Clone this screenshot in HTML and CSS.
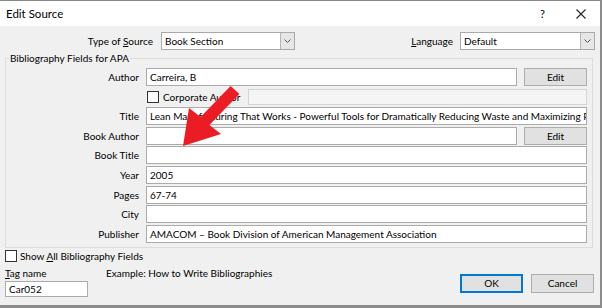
FILE: index.html
```html
<!DOCTYPE html>
<html lang="en">
<head>
    <meta charset="UTF-8">
    <title>Edit Source</title>
    <link rel="stylesheet" href="styles.css">
</head>
<body>
    <div class="window">
        <!-- title bar -->
        <div class="titlebar">
            <span class="title">Edit Source</span>
            <span class="help">?</span>
            <span class="close">
                <svg width="10" height="10" viewBox="0 0 10 10"><path d="M0.5 0.5 L9.5 9.5 M9.5 0.5 L0.5 9.5" stroke="#222" stroke-width="1.1" fill="none"/></svg>
            </span>
        </div>

        <div class="content">
            <div class="source-row">
                <label class="src-lbl">Type of <u>S</u>ource</label>
                <div class="select src-select">
                    <span class="value">Book Section</span>
                    <span class="drop"><svg width="7" height="4" viewBox="0 0 7 4"><path d="M0.5 0.5 L3.5 3.5 L6.5 0.5" stroke="#555" fill="none"/></svg></span>
                </div>
                <label class="lang-lbl"><u>L</u>anguage</label>
                <div class="select lang-select">
                    <span class="value">Default</span>
                    <span class="drop"><svg width="7" height="4" viewBox="0 0 7 4"><path d="M0.5 0.5 L3.5 3.5 L6.5 0.5" stroke="#555" fill="none"/></svg></span>
                </div>
            </div>

            <fieldset class="group">
                <legend>Bibliography Fields for APA</legend>
                <div class="fields">
                    <label>Author</label>
                    <div class="field">
                        <div class="input grow">Carreira, B</div>
                        <div class="button edit">Edit</div>
                    </div>

                    <span></span>
                    <div class="field corp">
                        <span class="check"></span>
                        <span class="corp-text">Corporate Author</span>
                        <div class="input disabled grow"></div>
                    </div>

                    <label>Title</label>
                    <div class="input">Lean Manufacturing That Works - Powerful Tools for Dramatically Reducing Waste and Maximizing Profits</div>

                    <label>Book Author</label>
                    <div class="field">
                        <div class="input grow"></div>
                        <div class="button edit">Edit</div>
                    </div>

                    <label>Book Title</label>
                    <div class="input"></div>

                    <label>Year</label>
                    <div class="input">2005</div>

                    <label>Pages</label>
                    <div class="input">67-74</div>

                    <label>City</label>
                    <div class="input"></div>

                    <label>Publisher</label>
                    <div class="input">AMACOM – Book Division of American Management Association</div>
                </div>
            </fieldset>

            <div class="footer">
                <div class="footer-left">
                    <div class="show-all">
                        <span class="check"></span>
                        <span>Show <u>A</u>ll Bibliography Fields</span>
                    </div>
                    <div class="tag-row">
                        <span class="tag-lbl"><u>T</u>ag name</span>
                        <span class="example">Example: How to Write Bibliographies</span>
                    </div>
                    <div class="input tag-input">Car052</div>
                </div>
                <div class="actions">
                    <div class="button ok">OK</div>
                    <div class="button">Cancel</div>
                </div>
            </div>
        </div>

        <!-- red annotation arrow -->
        <svg class="arrow" width="80" height="70" viewBox="0 0 80 70">
            <polygon points="69.4,13.1 60.6,4.9 30.6,35.9 19,27 13,65 51,53 39.4,44.1" fill="#ec1c24"/>
        </svg>
    </div>
</body>
</html>
```

FILE: styles.css
```css
* {
    box-sizing: border-box;
}

body {
    margin: 0;
    font-family: 'Lato', 'Noto Sans', sans-serif;
    font-size: 10px;
    color: #000;
    background-color: #fff;
}

.window {
    position: relative;
    width: 602px;
    height: 308px;
    background-color: #f0f0f0;
    border-top: 1px solid #8a8a8a;
    border-right: 2px solid #8c8c8c;
    border-bottom: 3px solid #8c8c8c;
    overflow: hidden;
}

.titlebar {
    height: 25px;
    background-color: #fff;
    display: flex;
    align-items: center;
    padding-left: 6px;
}

.title {
    font-size: 11.5px;
}

.help {
    margin-left: auto;
    font-size: 11px;
    width: 10px;
}

.close {
    display: flex;
    margin-left: 26px;
    margin-right: 14px;
}

.content {
    display: flex;
    flex-direction: column;
}

/* type of source / language */
.source-row {
    display: flex;
    align-items: center;
    margin-top: 6px;
    height: 18px;
}

.src-lbl {
    width: 153px;
    text-align: right;
    margin-right: 8px;
}

.lang-lbl {
    width: 158px;
    text-align: right;
    margin-right: 7px;
}

.select {
    display: flex;
    height: 18px;
    background-color: #fff;
    border: 1px solid #a9a9a9;
}

.src-select {
    width: 134px;
}

.lang-select {
    width: 135px;
}

.select .value {
    flex: 1;
    padding-left: 3px;
    line-height: 16px;
}

.select .drop {
    width: 14px;
    background-color: #e6e6e6;
    border-left: 1px solid #b4b4b4;
    display: flex;
    align-items: center;
    justify-content: center;
}

/* group box */
.group {
    margin: 2px 0 0 5px;
    width: 588px;
    border: 1px solid #dcdcdc;
    padding: 4px 5px 4px 0;
}

.group legend {
    padding: 0 1px;
    margin-left: 3px;
    line-height: 12px;
}

.fields {
    display: grid;
    grid-template-columns: 133px 1fr;
    column-gap: 7px;
    grid-auto-rows: 18px;
    row-gap: 1.6px;
}

.fields label {
    text-align: right;
    line-height: 18px;
}

.field {
    display: flex;
    gap: 7px;
}

.grow {
    flex: 1;
}

.input {
    height: 18px;
    background-color: #fff;
    border: 1px solid #ababab;
    padding-left: 3px;
    line-height: 16px;
    white-space: nowrap;
    overflow: hidden;
}

.input.disabled {
    height: 16px;
    margin-top: 1px;
    background-color: #f5f5f5;
    border-color: #d4d4d4;
}

.corp {
    align-items: center;
    gap: 0;
}

.corp .check {
    margin-left: 1px;
}

.corp-text {
    margin-left: 4px;
    width: 85px;
}

.check {
    width: 12px;
    height: 12px;
    background-color: #fff;
    border: 1px solid #333;
}

.button {
    height: 18px;
    background-color: #e1e1e1;
    border: 1px solid #adadad;
    text-align: center;
    line-height: 16px;
}

.edit {
    width: 63px;
}

/* bottom part */
.footer {
    display: flex;
    padding-left: 5px;
}

.footer-left {
    display: flex;
    flex-direction: column;
}

.show-all {
    display: flex;
    align-items: center;
    gap: 3px;
    margin-top: 2px;
    height: 12px;
}

.tag-row {
    display: flex;
    margin-top: 4px;
    height: 14px;
    line-height: 14px;
}

.tag-lbl {
    width: 101px;
}

.tag-input {
    margin-top: 1px;
    width: 83px;
    height: 16px;
    line-height: 14px;
}

.actions {
    display: flex;
    gap: 8px;
    margin-left: auto;
    margin-right: 6px;
    margin-top: 26px;
}

.actions .button {
    width: 63px;
    height: 19px;
    line-height: 17px;
}

.actions .ok {
    border-color: #0078d7;
    box-shadow: inset 0 0 0 1px #0078d7;
}

.arrow {
    position: absolute;
    left: 170px;
    top: 80px;
}
```
